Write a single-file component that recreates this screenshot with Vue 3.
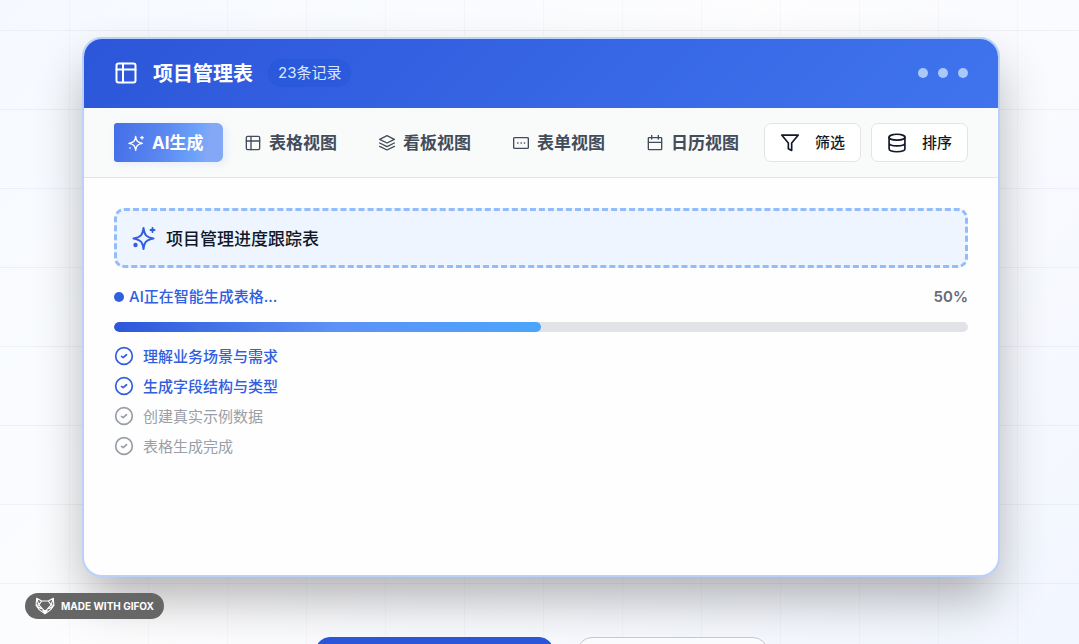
<template>
  <div class="page">
    <main class="window">
      <header class="window-header">
        <svg class="header-icon" viewBox="0 0 24 24">
          <rect x="2.500" y="2.500" width="19" height="19" rx="2" />
          <path d="M2.500 8.500h19M9 2.500v19" />
        </svg>
        <h1 class="title">项目管理表</h1>
        <span class="count">23条记录</span>
        <div class="dots">
          <span v-for="n in 3" :key="n" class="dot"></span>
        </div>
      </header>

      <nav class="toolbar">
        <div class="tabs">
          <button
            v-for="tab in tabs"
            :key="tab.name"
            type="button"
            class="tab"
            :class="{ active: tab.name === activeTab }"
            @click="activeTab = tab.name"
          >
            <svg class="tab-icon" viewBox="0 0 24 24">
              <path v-for="d in tab.paths" :key="d" :d="d" />
            </svg>
            <span class="label">{{ tab.name }}</span>
          </button>
        </div>
        <div class="actions">
          <button type="button" class="action">
            <svg class="action-icon" viewBox="0 0 24 24">
              <path d="M2 2.500h20l-8 9.500V21l-4-2v-7z" />
            </svg>
            <span class="label">筛选</span>
          </button>
          <button type="button" class="action">
            <svg class="action-icon" viewBox="0 0 24 24">
              <ellipse cx="12" cy="5" rx="9.500" ry="3.500" />
              <path d="M2.500 5v14c0 2 4 3.500 9.500 3.500s9.500-1.500 9.500-3.500V5M2.500 12c0 2 4 3.500 9.500 3.500s9.500-1.500 9.500-3.500" />
            </svg>
            <span class="label">排序</span>
          </button>
        </div>
      </nav>

      <section class="content">
        <div class="prompt">
          <svg class="prompt-icon" viewBox="0 0 24 24">
            <path :d="sparkle" />
            <circle class="solid" cx="3.500" cy="19" r="1.200" />
            <path d="M20.500 2v4M18.500 4h4" />
          </svg>
          <span class="label">项目管理进度跟踪表</span>
        </div>

        <div class="status">
          <span class="status-dot"></span>
          <span>AI正在智能生成表格...</span>
          <span class="percent">{{ progress }}%</span>
        </div>
        <div class="track">
          <div class="bar" :style="{ width: progress + '%' }"></div>
        </div>

        <ul class="steps">
          <li
            v-for="step in steps"
            :key="step.text"
            class="step"
            :class="{ done: step.done }"
          >
            <svg class="step-icon" viewBox="0 0 24 24">
              <circle cx="12" cy="12" r="10" />
              <path d="M9 12.500l2 1.500 4-3.500" />
            </svg>
            <span class="label">{{ step.text }}</span>
          </li>
        </ul>
      </section>
    </main>

    <div class="page-actions">
      <button type="button" class="page-button primary"></button>
      <button type="button" class="page-button"></button>
    </div>

    <div class="badge">
      <svg class="fox" viewBox="0 0 36 32">
        <path d="M3 2l9 5h12l9-5 1 13-6 8-10 7-10-7-6-8zM3 2l4 12 5-7M33 2l-4 12-5-7M7 14l11 12 11-12M7 14l-5 1 9 6M29 14l5 1-9 6" />
        <path class="nose" d="M14 24h8l-4 5z" />
      </svg>
      <span>MADE WITH GIFOX</span>
    </div>
  </div>
</template>

<script setup>
import { ref } from 'vue'

const sparkle =
  'M11.500 2c1 7 2.500 9 10 10.500-7.500 1.500-9 3.500-10 10.500-1-7-2.500-9-10-10.500 7.500-1.500 9-3.500 10-10.500z'

const activeTab = ref('AI生成')
const progress = ref(50)

const tabs = [
  { name: 'AI生成', paths: [sparkle, 'M21 2v4M19 4h4', 'M3 19v1'] },
  { name: '表格视图', paths: ['M4 2h16q2 0 2 2v16q0 2-2 2H4q-2 0-2-2V4q0-2 2-2z', 'M2 9h20M9 2v20'] },
  { name: '看板视图', paths: ['M12 1l11 5.500-11 5.500L1 6.500z', 'M1 12l11 5.500 11-5.500', 'M1 17l11 5.500 11-5.500'] },
  { name: '表单视图', paths: ['M3 4h18q2 0 2 1v14q0 1-2 1H3q-2 0-2-1V5q0-1 2-1z', 'M7 12h.5M12 12h.5M17 12h.5'] },
  { name: '日历视图', paths: ['M3 4h18q1 0 1 1v16q0 1-1 1H3q-1 0-1-1V5q0-1 1-1z', 'M7 0v6M17 0v6M2 11h20'] }
]

const steps = [
  { text: '理解业务场景与需求', done: true },
  { text: '生成字段结构与类型', done: true },
  { text: '创建真实示例数据', done: false },
  { text: '表格生成完成', done: false }
]
</script>

<style>
body {
  margin: 0;
}
</style>

<style scoped>
.page {
  position: relative;
  box-sizing: border-box;
  height: 100vh;
  padding: 37px 79px 0 82px;
  overflow: hidden;
  font-family: Inter, "Noto Sans CJK SC", sans-serif;
  background:
    linear-gradient(rgba(100, 116, 139, 0.08) 1px, transparent 1px) 0 30px / 79px 79px,
    linear-gradient(90deg, rgba(100, 116, 139, 0.04) 1px, transparent 1px) 69px 0 / 79px 79px,
    linear-gradient(135deg, #f5f9ff 0%, #fdfdfe 45%, #f2f6ff 100%);
}
button {
  font-family: inherit;
  cursor: pointer;
}
svg {
  flex: none;
  fill: none;
  stroke: currentColor;
  stroke-width: 2;
  stroke-linecap: round;
  stroke-linejoin: round;
}
.label {
  padding-bottom: 2px;
}
.window {
  border: 2px solid #b9d1fb;
  border-radius: 20px;
  overflow: hidden;
  background: #fefefe;
  box-shadow: 0 25px 50px -4px rgba(0, 0, 0, 0.3);
}
.window-header {
  display: flex;
  align-items: center;
  height: 67px;
  padding: 0 30px 2px;
  color: #fff;
  background: linear-gradient(135deg, #2c56d9, #4074ee);
}
.header-icon {
  width: 24px;
  height: 24px;
}
.title {
  margin: 0 0 0 15px;
  font-size: 20px;
  font-weight: 700;
}
.count {
  margin-left: 15px;
  padding: 3px 10px;
  border-radius: 14px;
  font-size: 15px;
  line-height: 22px;
  color: #dbe8ff;
  background: rgba(29, 78, 216, 0.3);
}
.dots {
  display: flex;
  gap: 10px;
  margin-left: auto;
}
.dot {
  width: 10px;
  height: 10px;
  border-radius: 50%;
  background: #a9c9fa;
}
.toolbar {
  display: flex;
  align-items: center;
  justify-content: space-between;
  height: 69px;
  padding: 0 30px;
  border-bottom: 1px solid #e2e4e8;
  background: #f9fafa;
}
.tabs {
  display: flex;
  gap: 8px;
}
.tab {
  display: flex;
  align-items: center;
  gap: 8px;
  min-width: 126px;
  height: 39px;
  padding: 0 14px;
  border: 0;
  border-radius: 6px;
  font-size: 17px;
  font-weight: 700;
  color: #434c5b;
  background: none;
  white-space: nowrap;
}
.tab.active {
  min-width: 109px;
  border-radius: 3px 6px 6px 3px;
  color: #fff;
  background: linear-gradient(100deg, #446ee7 0%, #5b87f1 45%, #6ca3fa 74%, #84a8f5 85%);
  box-shadow: 3px 2px 8px rgba(59, 130, 246, 0.1);
}
.tab-icon {
  width: 16px;
  height: 16px;
}
.actions {
  display: flex;
  gap: 10px;
}
.action {
  display: flex;
  align-items: center;
  gap: 15px;
  height: 39px;
  padding: 0 15px;
  border: 1px solid #e1e4e9;
  border-radius: 7px;
  font-size: 15px;
  font-weight: 500;
  color: #111827;
  background: #fff;
  white-space: nowrap;
}
.action-icon {
  width: 20px;
  height: 20px;
}
.content {
  min-height: 337px;
  box-sizing: content-box;
  padding: 30px;
}
.prompt {
  display: flex;
  align-items: center;
  gap: 10px;
  height: 54px;
  padding: 0 15px;
  border: 3px dashed #93bcfa;
  border-radius: 10px;
  font-size: 17px;
  font-weight: 500;
  color: #111827;
  background: #eef5ff;
}
.prompt-icon {
  width: 24px;
  height: 24px;
  color: #315fdf;
}
.solid {
  fill: currentColor;
}
.status {
  display: flex;
  align-items: center;
  gap: 5px;
  margin-top: 17px;
  font-size: 15px;
  line-height: 24px;
  font-weight: 500;
  color: #315fdf;
}
.status-dot {
  width: 10px;
  height: 10px;
  border-radius: 50%;
  background: #315fdf;
}
.percent {
  margin-left: auto;
  font-weight: 600;
  color: #656b78;
}
.track {
  height: 10px;
  margin-top: 13px;
  border-radius: 5px;
  overflow: hidden;
  background: #e2e3e7;
}
.bar {
  height: 100%;
  border-radius: 5px;
  background: linear-gradient(90deg, #2c57da, #5d92f6 52%, #4ba5fb);
}
.steps {
  margin: 9px 0 0;
  padding: 0;
  list-style: none;
}
.step {
  display: flex;
  align-items: center;
  gap: 9px;
  height: 30px;
  font-size: 15px;
  color: #999ea8;
}
.step.done {
  font-weight: 500;
  color: #315fdf;
}
.step-icon {
  width: 20px;
  height: 20px;
}
.page-actions {
  display: flex;
  justify-content: center;
  gap: 23px;
  margin-top: 60px;
}
.page-button {
  width: 191px;
  height: 60px;
  border: 1px solid #c5c8cf;
  border-radius: 15px;
  background: #fafbfd;
}
.page-button.primary {
  width: 239px;
  border-color: #2c56d9;
  background: #2c56d9;
}
.badge {
  position: absolute;
  left: 25px;
  bottom: 25px;
  display: flex;
  align-items: center;
  gap: 6px;
  height: 26px;
  padding: 0 10px;
  border-radius: 13px;
  font-size: 10px;
  font-weight: 700;
  color: #fff;
  background: #666;
}
.fox {
  width: 20px;
  height: 18px;
}
.nose {
  fill: currentColor;
}
</style>
